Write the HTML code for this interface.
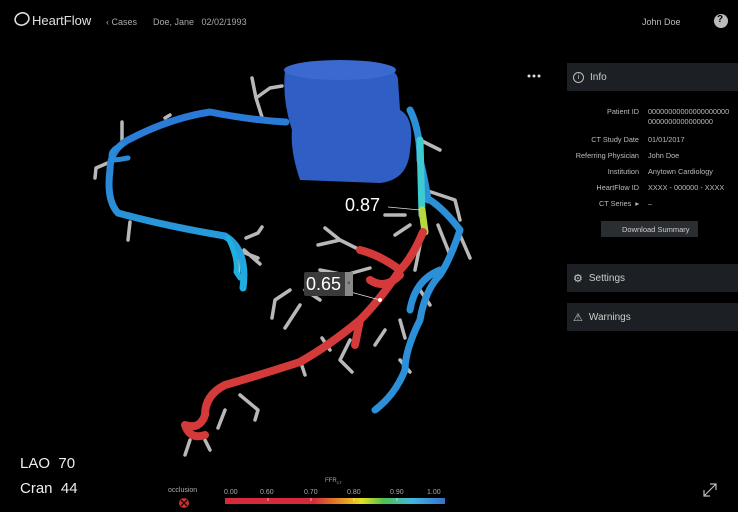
<!DOCTYPE html>
<html><head><meta charset="utf-8"><style>
*{margin:0;padding:0;box-sizing:border-box}
body{width:738px;height:512px;background:#000;overflow:hidden;font-family:"Liberation Sans",sans-serif;color:#c8c8c8;position:relative}
.t{position:absolute;white-space:nowrap}
.bar{position:absolute;left:567px;width:171px;height:28px;background:#1c2024;font-size:10px;color:#ccc;display:flex;align-items:center;padding-left:6px;gap:6px}
.row{position:absolute;font-size:7.3px;color:#bbb}
.row .k{position:absolute;right:0;text-align:right;white-space:nowrap}
</style></head><body>
<svg width="738" height="512" style="position:absolute;left:0;top:0">
<ellipse cx="22" cy="19" rx="7" ry="6" fill="none" stroke="#ddd" stroke-width="1.6" transform="rotate(-20 22 19)"/>
<defs>
<linearGradient id="lv" x1="0" y1="0" x2="0" y2="1"><stop offset="0" stop-color="#2a78d8"/><stop offset="0.5" stop-color="#2a8cd8"/><stop offset="1" stop-color="#20b0e0"/></linearGradient>
<linearGradient id="g" x1="0" x2="1"><stop offset="0" stop-color="#d42a3a"/><stop offset="0.4" stop-color="#d42a3a"/><stop offset="0.55" stop-color="#e8a020"/><stop offset="0.62" stop-color="#e8e020"/><stop offset="0.72" stop-color="#50c050"/><stop offset="0.85" stop-color="#40b8e0"/><stop offset="1" stop-color="#3a70c8"/></linearGradient>
</defs>
<path d="M285 70 Q320 58 370 64 Q398 68 398 80 L400 110 Q415 118 410 150 Q408 180 380 183 L300 180 Q290 150 292 130 Q282 100 285 70Z" fill="#2f5fc4"/>
<ellipse cx="340" cy="70" rx="56" ry="10" fill="#3a6ad0"/>
<g fill="none" stroke-linecap="round" stroke-linejoin="round">
<g stroke="#b8b8b8" stroke-width="3.5">
<path d="M262 117 L256 98 L252 78 M256 98 L270 88 L282 86"/>
<path d="M170 115 L165 118 M122 140 L122 122 M110 162 L96 168 L95 178 M130 222 L128 240"/>
<path d="M246 238 L258 233 L262 227 M232 248 L258 258 M240 255 L238 275 M244 250 L260 264"/>
<path d="M290 290 L275 300 L272 318 M300 305 L285 328 M320 300 L305 290"/>
<path d="M360 250 L340 240 L318 245 M340 240 L325 228 M370 268 L345 275 L320 270 M350 340 L340 360 L352 372 M330 350 L322 338"/>
<path d="M420 140 L440 150 M425 190 L455 200 L460 220 M410 225 L395 235 M420 245 L415 270 M438 225 L450 255 M460 235 L470 258 M405 215 L385 215"/>
<path d="M225 410 L218 428 M240 395 L258 410 L255 420 M205 440 L210 450 M190 440 L185 455 M300 360 L305 375"/>
<path d="M400 320 L405 338 M385 330 L375 345 M400 360 L410 372 M420 290 L430 305"/>
</g>
<path d="M286 122 Q250 120 210 112 Q170 118 128 140 Q110 150 110 170 Q106 200 118 213 Q165 226 225 236 Q248 250 243 288" stroke="url(#lv)" stroke-width="7"/>
<path d="M228 238 Q238 258 236 272 L240 278" stroke="#20b0e0" stroke-width="5"/>
<path d="M122 145 Q108 150 112 160 Q118 160 128 158" stroke="#2a8cd8" stroke-width="5"/>
<g stroke="#2c90d8" stroke-width="7">
<path d="M410 110 Q420 130 420 160 Q425 180 428 200"/>
<path d="M430 200 Q445 210 460 230 Q450 260 440 275 Q425 290 420 320 Q405 350 405 370 Q395 395 375 410"/>
<path d="M440 270 Q415 280 410 310"/>
</g>
<path d="M420 140 L422 215" stroke="#3ecbd0" stroke-width="7"/>
<path d="M422 210 L425 232" stroke="#b8d840" stroke-width="7"/>
<g stroke="#d43a3a" stroke-width="8">
<path d="M423 232 Q412 258 400 270 Q380 300 360 320 Q330 345 300 362 Q260 375 225 385 Q205 395 205 415 Q200 430 185 425 Q190 440 205 435"/>
<path d="M400 270 Q380 255 360 250 M400 275 Q385 290 370 280 M360 320 L355 345"/>
</g>
</g>
<line x1="388" y1="207" x2="420" y2="210" stroke="#ddd" stroke-width="0.8"/>
<line x1="343" y1="290" x2="380" y2="300" stroke="#ddd" stroke-width="0.8"/>
<circle cx="380" cy="300" r="2" fill="#fff"/>
<rect x="304" y="272" width="44" height="24" rx="2" fill="#3a3a3a"/>
<rect x="345" y="272" width="8" height="24" fill="#888"/>
<circle cx="529" cy="76" r="1.5" fill="#ddd"/><circle cx="534" cy="76" r="1.5" fill="#ddd"/><circle cx="539" cy="76" r="1.5" fill="#ddd"/>
<circle cx="721" cy="21" r="7" fill="#bbb"/>
<rect x="225" y="498" width="220" height="6" fill="url(#g)"/>
<rect x="246" y="497" width="8" height="8" fill="#000" transform="skewX(-15)"/>
<g stroke="#fff" stroke-width="0.6"><line x1="268" y1="498" x2="268" y2="501"/><line x1="311" y1="498" x2="311" y2="501"/><line x1="354" y1="498" x2="354" y2="501"/><line x1="397" y1="498" x2="397" y2="501"/></g>
<circle cx="184" cy="503" r="5" fill="#c83030"/>
<path d="M181 500 L187 506 M187 500 L181 506" stroke="#000" stroke-width="1.2"/>
<path d="M704 496 L716 484 M710 484 L716 484 L716 490 M704 490 L704 496 L710 496" stroke="#bbb" stroke-width="1.2" fill="none"/>
</svg>
<div class="t" style="left:32px;top:13px;font-size:13px;color:#e0e0e0">HeartFlow</div>
<div class="t" style="left:106px;top:17px;font-size:9px;color:#aaa">‹ Cases</div>
<div class="t" style="left:153px;top:17px;font-size:9px;color:#aaa">Doe, Jane&nbsp;&nbsp;&nbsp;02/02/1993</div>
<div class="t" style="left:642px;top:17px;font-size:9px;color:#bbb">John Doe</div>
<div class="t" style="left:717px;top:14px;font-size:10px;color:#000;font-weight:bold">?</div>
<div class="t" style="left:345px;top:195px;font-size:18px;color:#fff">0.87</div>
<div class="t" style="left:306px;top:274px;font-size:18px;color:#fff">0.65</div>
<div class="t" style="left:347px;top:281px;font-size:6px;color:#222">×</div>
<div class="bar" style="top:63px"><span style="display:inline-block;width:11px;height:11px;border:1px solid #bbb;border-radius:50%;font-size:7px;text-align:center;line-height:9px">i</span>Info</div>
<div class="bar" style="top:264px"><span style="font-size:11px">⚙</span>Settings</div>
<div class="bar" style="top:303px"><span style="font-size:11px">⚠</span>Warnings</div>
<div class="row" style="left:567px;top:107px;width:72px"><span class="k">Patient ID</span></div>
<div class="row" style="left:648px;top:107px;line-height:10px">00000000000000000000<br>0000000000000000</div>
<div class="row" style="left:567px;top:135px;width:72px"><span class="k">CT Study Date</span></div><div class="row" style="left:648px;top:135px">01/01/2017</div>
<div class="row" style="left:567px;top:151px;width:72px"><span class="k">Referring Physician</span></div><div class="row" style="left:648px;top:151px">John Doe</div>
<div class="row" style="left:567px;top:167px;width:72px"><span class="k">Institution</span></div><div class="row" style="left:648px;top:167px">Anytown Cardiology</div>
<div class="row" style="left:567px;top:183px;width:72px"><span class="k">HeartFlow ID</span></div><div class="row" style="left:648px;top:183px">XXXX - 000000 - XXXX</div>
<div class="row" style="left:567px;top:199px;width:72px"><span class="k">CT Series&nbsp;&nbsp;▸</span></div><div class="row" style="left:648px;top:199px">–</div>
<div class="t" style="left:601px;top:221px;width:97px;height:16px;background:#2a2e32;font-size:7.5px;color:#ccc;padding:4px 0 0 21px">Download Summary</div>
<div class="t" style="left:20px;top:455px;font-size:15px;color:#eee">LAO&nbsp;&nbsp;70</div>
<div class="t" style="left:20px;top:480px;font-size:15px;color:#eee">Cran&nbsp;&nbsp;44</div>
<div class="t" style="left:168px;top:487px;font-size:7px;color:#aaa">occlusion</div>
<div class="t" style="left:325px;top:478px;font-size:6px;color:#aaa">FFR<sub style="font-size:4px">CT</sub></div>
<div class="t" style="left:224px;top:489px;font-size:7px;color:#aaa">0.00</div>
<div class="t" style="left:260px;top:489px;font-size:7px;color:#aaa">0.60</div>
<div class="t" style="left:304px;top:489px;font-size:7px;color:#aaa">0.70</div>
<div class="t" style="left:347px;top:489px;font-size:7px;color:#aaa">0.80</div>
<div class="t" style="left:390px;top:489px;font-size:7px;color:#aaa">0.90</div>
<div class="t" style="left:427px;top:489px;font-size:7px;color:#aaa">1.00</div>
</body></html>
